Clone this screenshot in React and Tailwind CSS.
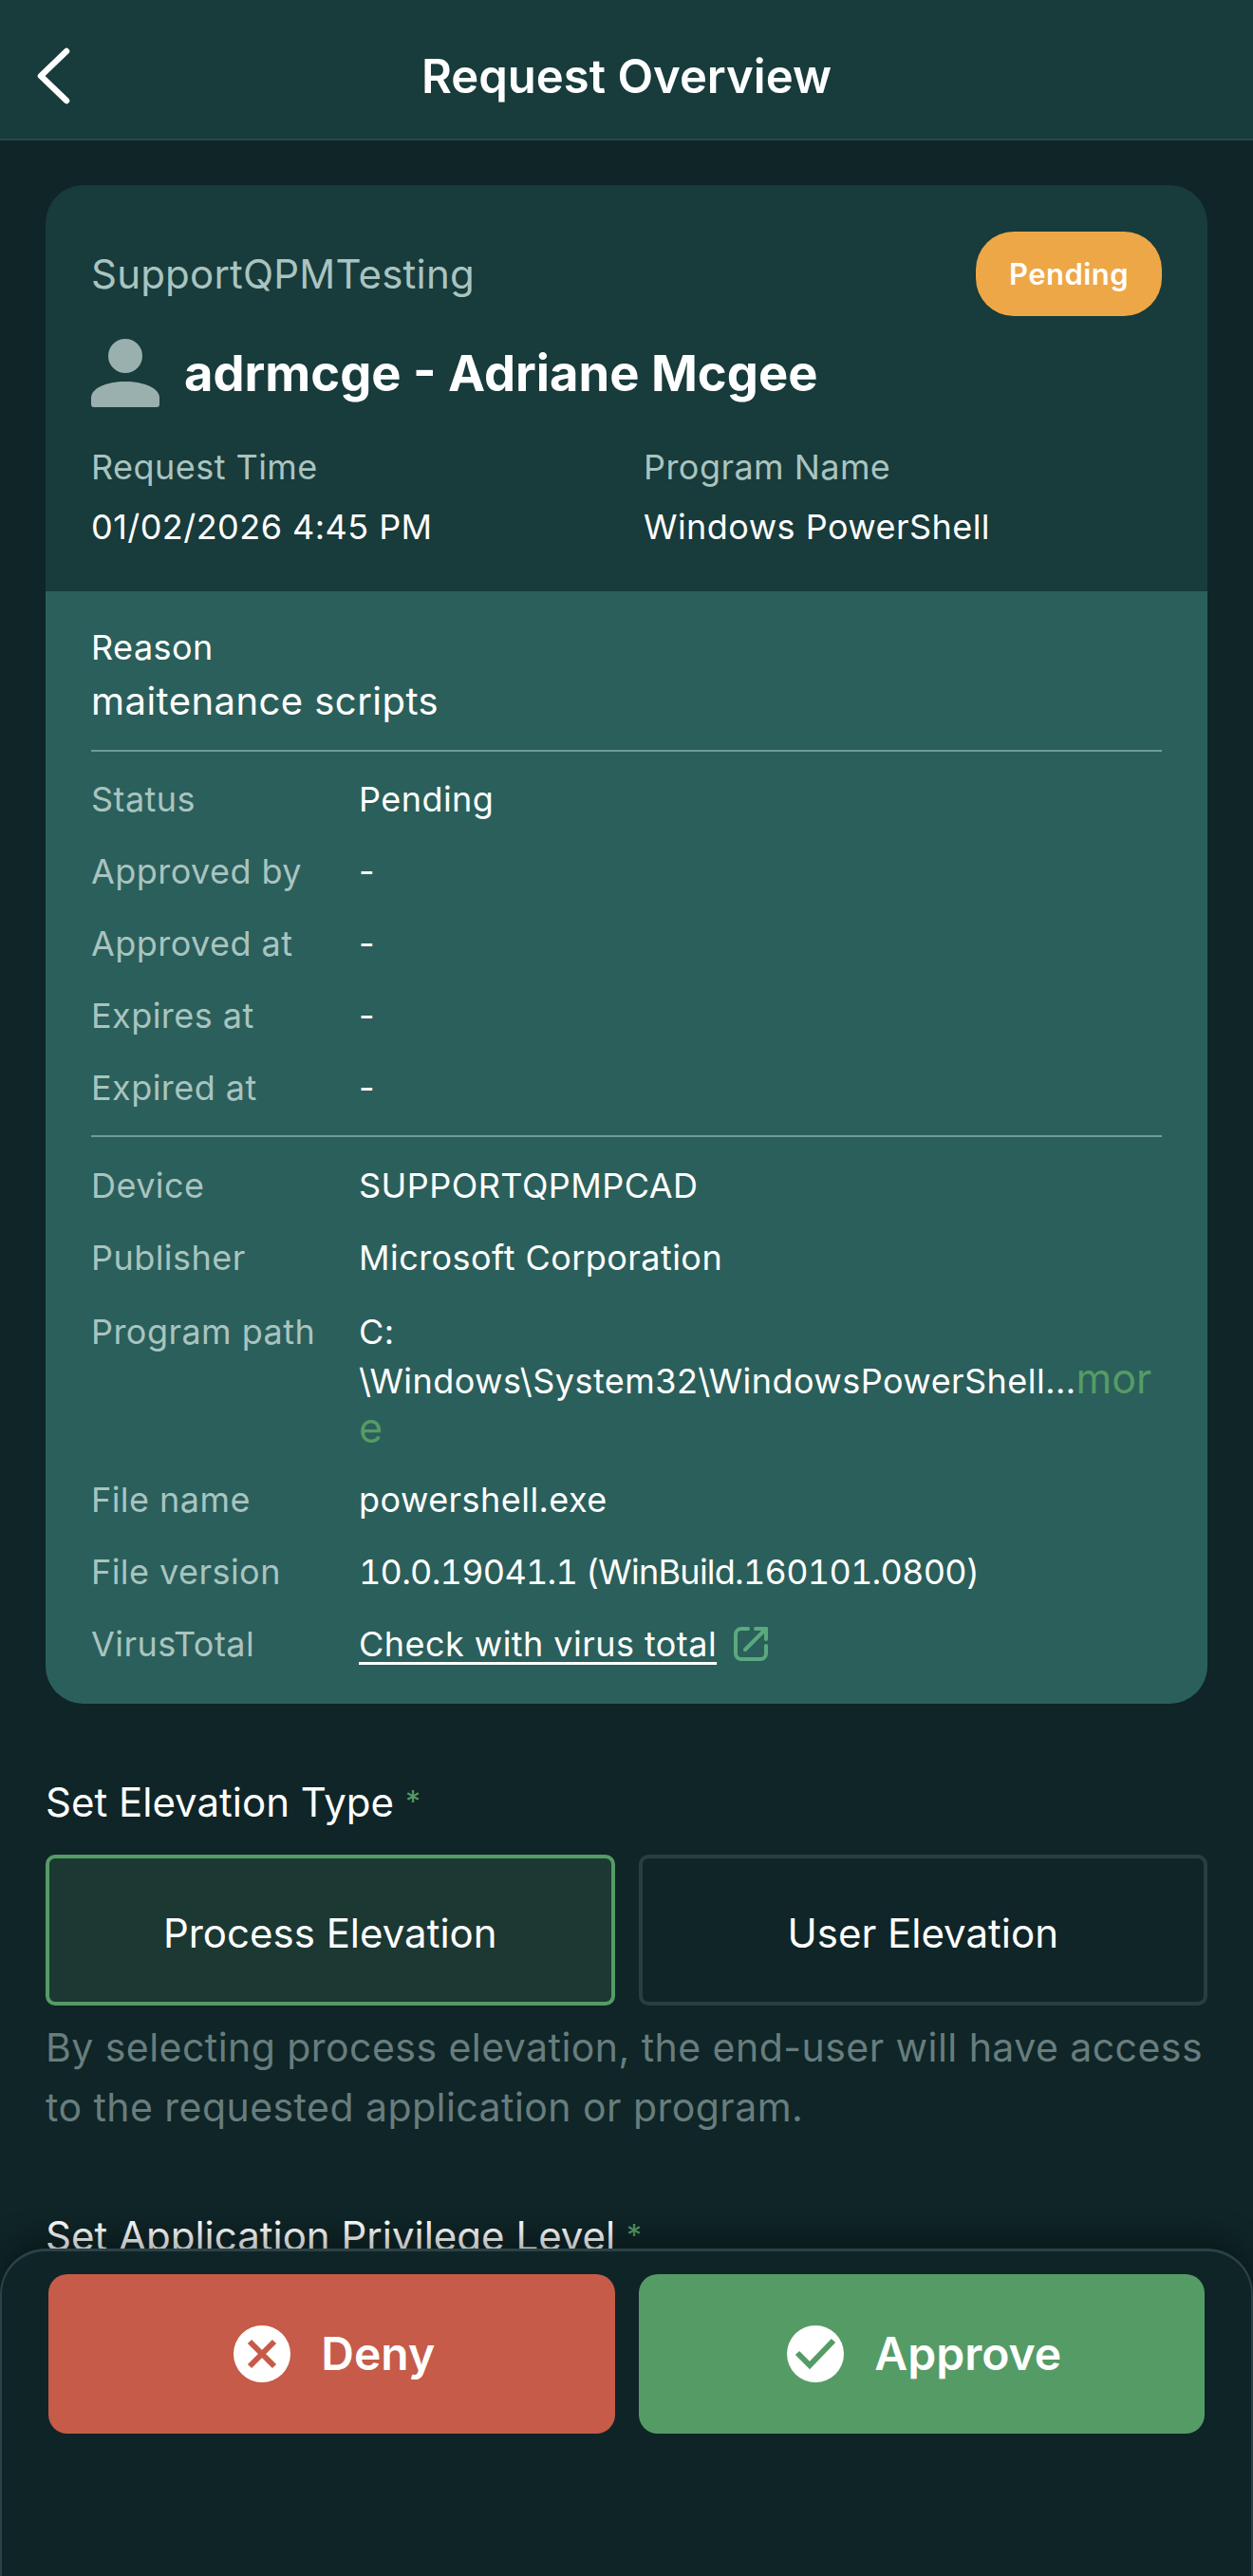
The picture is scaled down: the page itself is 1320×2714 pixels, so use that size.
import React from 'react';

const statusRows = [
  ['Status', 'Pending'],
  ['Approved by', '-'],
  ['Approved at', '-'],
  ['Expires at', '-'],
  ['Expired at', '-'],
];

function Row({ label, children }) {
  return (
    <div className="flex h-[76px] items-center">
      <div className="w-[282px] shrink-0 text-[#a9c4c0]">{label}</div>
      <div className="min-w-0 flex-1 text-white">{children}</div>
    </div>
  );
}

function Divider() {
  return <div className="h-[2px] bg-[#6f9c96]" />;
}

export default function App() {
  return (
    <div className="relative h-[2714px] w-[1320px] overflow-hidden bg-[#0f2527] font-['Inter',sans-serif] text-[36px] leading-[44px] tracking-[0.45px] text-white">
      {/* Header */}
      <div className="relative flex h-[148px] items-center justify-center border-b-2 border-[#27484a] bg-[#183b3b] pt-[16px]">
        <svg className="absolute left-[36px] top-[48px] h-[64px] w-[40px]" viewBox="0 0 40 64" fill="none">
          <path d="M34 6 L7 32 L34 58" stroke="white" strokeWidth="6.5" strokeLinecap="round" strokeLinejoin="round" />
        </svg>
        <h1 className="text-[49px] font-semibold leading-[60px] tracking-normal">Request Overview</h1>
      </div>

      <div className="px-[48px] pt-[47px]">
        {/* Request card */}
        <div className="overflow-hidden rounded-[40px] bg-[#183b3b]">
          <div className="px-[48px] pb-[46px] pt-[49px]">
            <div className="flex h-[89px] items-center justify-between">
              <span className="text-[42px] tracking-[0.2px] text-[#a9c4c0]">SupportQPMTesting</span>
              <span className="flex h-[89px] w-[196px] items-center justify-center rounded-[40px] bg-[#eea746] text-[31px] font-semibold text-white">
                Pending
              </span>
            </div>
            <div className="mt-[24px] flex h-[72px] items-center">
              <svg className="h-[72px] w-[72px] shrink-0" viewBox="0 0 72 72" fill="#9ab0ae">
                <circle cx="36" cy="18" r="18" />
                <path d="M0 62 C0 52 16 45 36 45 C56 45 72 52 72 62 V69 a3 3 0 0 1 -3 3 H3 a3 3 0 0 1 -3 -3 Z" />
              </svg>
              <span className="ml-[26px] text-[52.5px] font-bold leading-[64px] tracking-normal">adrmcge - Adriane Mcgee</span>
            </div>
            <div className="mt-[41px] grid grid-cols-[582px_1fr]">
              <div className="text-[#a9c4c0]">Request Time</div>
              <div className="text-[#a9c4c0]">Program Name</div>
              <div className="mt-[19px]">01/02/2026 4:45 PM</div>
              <div className="mt-[19px]">Windows PowerShell</div>
            </div>
          </div>

          <div className="bg-[#2b5f5b] px-[48px] pb-[25px] pt-[37px]">
            <div>Reason</div>
            <div className="mt-[10px] text-[40px] leading-[50px]">maitenance scripts</div>
            <div className="mb-[12px] mt-[26px]">
              <Divider />
            </div>
            {statusRows.map(([label, value]) => (
              <Row key={label} label={label}>
                {value}
              </Row>
            ))}
            <div className="mb-[13px] mt-[12px]">
              <Divider />
            </div>
            <Row label="Device">SUPPORTQPMPCAD</Row>
            <Row label="Publisher">Microsoft Corporation</Row>
            <div className="flex pb-[9px] pt-[14px] leading-[52px]">
              <div className="w-[282px] shrink-0 text-[#a9c4c0]">Program path</div>
              <div className="min-w-0 flex-1 text-white">
                <div>C:</div>
                <div className="break-all">
                  \Windows\System32\WindowsPowerShell...
                  <span className="text-[43px] leading-[40px] tracking-normal text-[#559b66]">more</span>
                </div>
              </div>
            </div>
            <Row label="File name">powershell.exe</Row>
            <Row label="File version">
              <span className="tabular-nums tracking-[-0.75px]">10.0.19041.1 (WinBuild.160101.0800)</span>
            </Row>
            <Row label="VirusTotal">
              <span className="flex items-center gap-[18px]">
                <span className="underline underline-offset-[6px]">Check with virus total</span>
                <svg className="h-[36px] w-[36px]" viewBox="0 0 36 36" fill="none" stroke="#5aa97f" strokeWidth="4" strokeLinecap="round" strokeLinejoin="round">
                  <path d="M15 2 H8 a6 6 0 0 0 -6 6 V28 a6 6 0 0 0 6 6 H28 a6 6 0 0 0 6 -6 V20" />
                  <path d="M23 2 H34 V13" />
                  <path d="M34 2 L12 24" />
                </svg>
              </span>
            </Row>
          </div>
        </div>

        {/* Elevation type */}
        <div className="mt-[79px] text-[42px] leading-[50px] tracking-normal">
          Set Elevation Type <span className="align-top text-[32px] text-[#559b66]">*</span>
        </div>
        <div className="mt-[30px] flex gap-[25px]">
          <button className="flex h-[159px] flex-1 items-center justify-center rounded-[10px] border-4 border-[#559b66] bg-[#1b3833] pt-[7px] text-[42px] tracking-normal">
            Process Elevation
          </button>
          <button className="flex h-[159px] flex-1 items-center justify-center rounded-[10px] border-4 border-[#27403f] bg-[#0f2527] pt-[7px] text-[42px] tracking-normal">
            User Elevation
          </button>
        </div>
        <p className="mt-[13px] text-[41px] leading-[63px] tracking-[0.45px] text-[#687d7d]">
          By selecting process elevation, the end-user will have access to the requested application or program.
        </p>
        <div className="mt-[79px] text-[42px] leading-[50px] tracking-normal">
          Set Application Privilege Level <span className="align-top text-[32px] text-[#559b66]">*</span>
        </div>
      </div>

      {/* Action sheet */}
      <div className="absolute inset-x-0 bottom-0 h-[345px] rounded-t-[48px] border-x-2 border-t-[3px] border-[#2a4245] bg-[#0f2427] px-[49px] pt-[24px] shadow-[0_-12px_30px_rgba(0,0,0,0.35)]">
        <div className="flex gap-[25px]">
          <button className="flex h-[168px] flex-1 items-center justify-center gap-[32px] rounded-[20px] bg-[#c55b48] pl-[6px] text-[48px] font-semibold tracking-normal">
            <svg className="h-[60px] w-[60px]" viewBox="0 0 60 60">
              <circle cx="30" cy="30" r="30" fill="white" />
              <path d="M17 17 L43 43 M43 17 L17 43" stroke="#c55b48" strokeWidth="6" />
            </svg>
            Deny
          </button>
          <button className="flex h-[168px] flex-1 items-center justify-center gap-[32px] rounded-[20px] bg-[#559b66] pl-[6px] text-[48px] font-semibold tracking-normal">
            <svg className="h-[60px] w-[60px]" viewBox="0 0 60 60">
              <circle cx="30" cy="30" r="30" fill="white" />
              <path d="M11 29 L24 42 L49 16" fill="none" stroke="#559b66" strokeWidth="6" />
            </svg>
            Approve
          </button>
        </div>
      </div>
    </div>
  );
}
